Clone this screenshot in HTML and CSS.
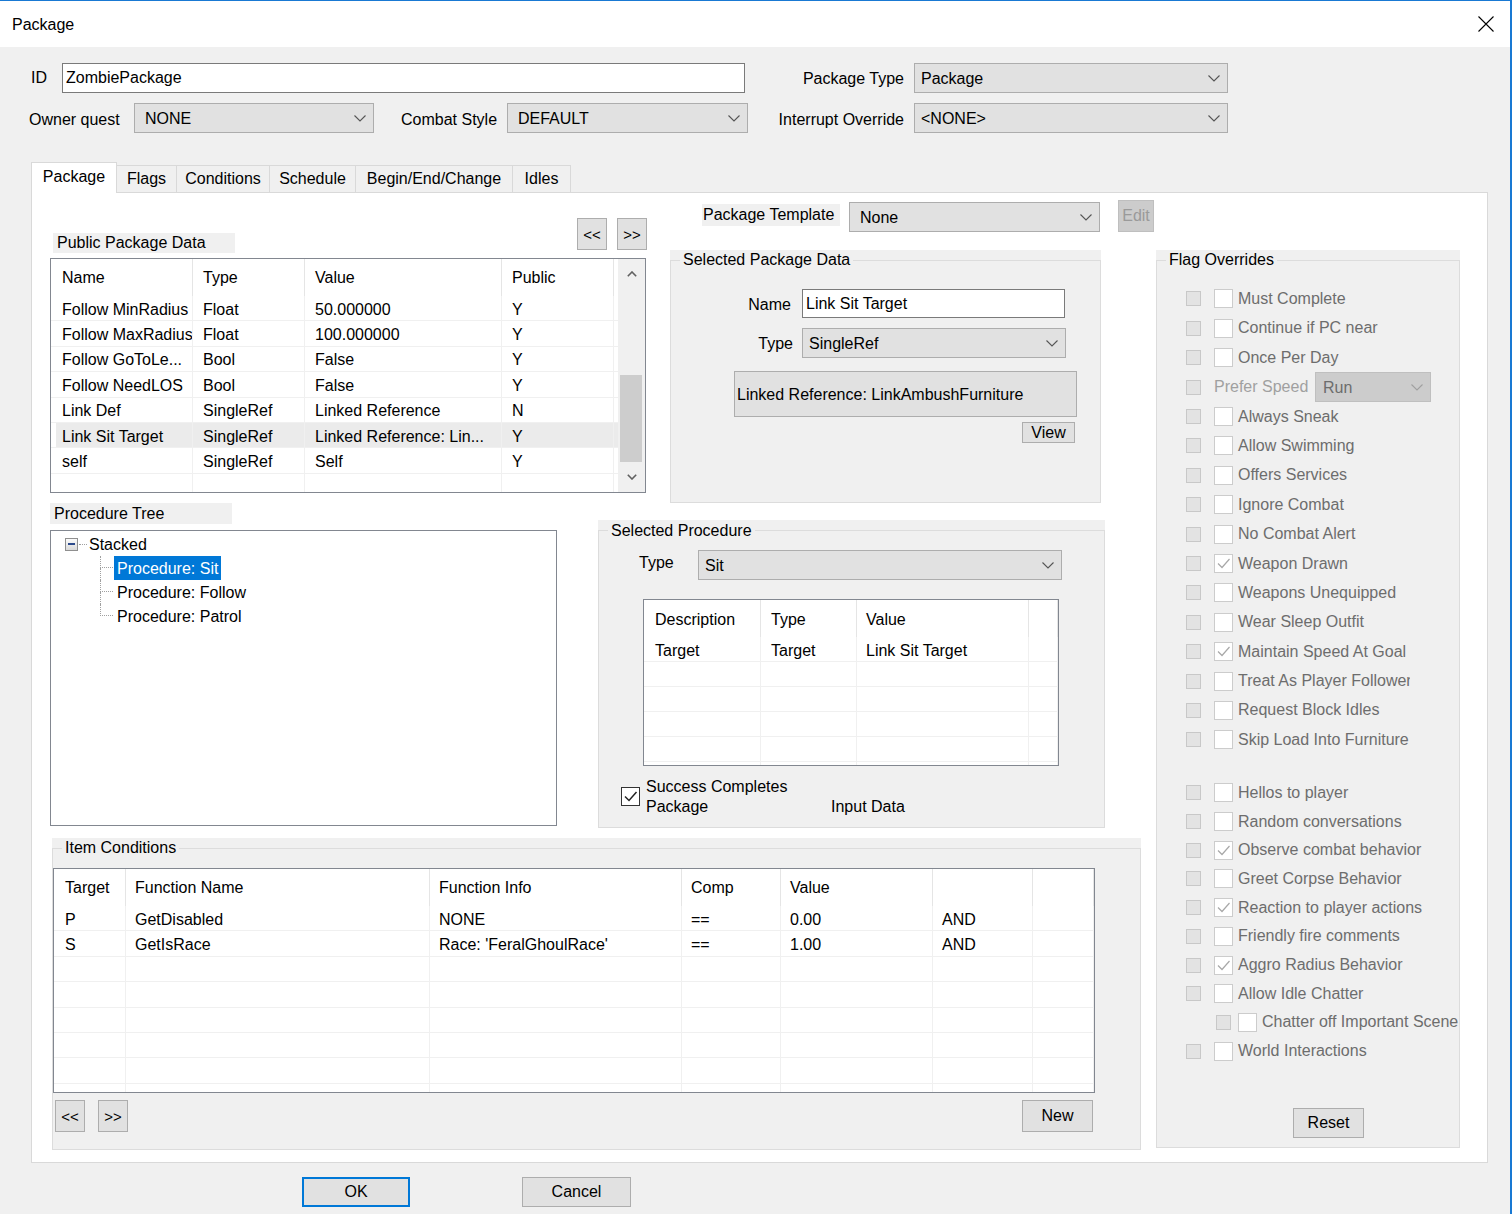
FILE: index.html
```html
<!DOCTYPE html>
<html>
<head>
<meta charset="utf-8">
<title>Package</title>
<link rel="stylesheet" href="styles.css">
</head>
<body>
<div class="window">
  <div class="titlebar">
    <span class="title">Package</span>
    <svg class="close" width="16" height="16" viewBox="0 0 16 16"><path d="M0.5 0.5 L15.5 15.5 M15.5 0.5 L0.5 15.5"/></svg>
  </div>
  <div class="client">
    <div class="frow">
      <span class="lbl l-id">ID</span>
      <div class="edit e-id">ZombiePackage</div>
      <span class="lbl lbl-r l-ptype">Package Type</span>
      <div class="combo c-ptype"><span>Package</span><svg class="chev" viewBox="0 0 12 7"><polyline points="0.5,0.5 6,6 11.5,0.5"/></svg></div>
    </div>
    <div class="frow r2">
      <span class="lbl l-owner">Owner quest</span>
      <div class="combo c-owner"><span>NONE</span><svg class="chev" viewBox="0 0 12 7"><polyline points="0.5,0.5 6,6 11.5,0.5"/></svg></div>
      <span class="lbl l-cstyle">Combat Style</span>
      <div class="combo c-cstyle"><span>DEFAULT</span><svg class="chev" viewBox="0 0 12 7"><polyline points="0.5,0.5 6,6 11.5,0.5"/></svg></div>
      <span class="lbl lbl-r l-int">Interrupt Override</span>
      <div class="combo c-int"><span>&lt;NONE&gt;</span><svg class="chev" viewBox="0 0 12 7"><polyline points="0.5,0.5 6,6 11.5,0.5"/></svg></div>
    </div>

    <div class="tabs">
      <div class="tab sel t-pkg">Package</div>
      <div class="tab t-flags">Flags</div>
      <div class="tab t-cond">Conditions</div>
      <div class="tab t-sched">Schedule</div>
      <div class="tab t-bec">Begin/End/Change</div>
      <div class="tab t-idles">Idles</div>
    </div>

    <div class="panel">
      <div class="pmain">
        <div class="rowa">
          <div class="ppd-col">
            <div class="ppd-head">
              <div class="static s-ppd">Public Package Data</div>
              <div class="navbtns"><div class="btn nb">&lt;&lt;</div><div class="btn nb">&gt;&gt;</div></div>
            </div>
            <div class="lv ppd">
              <div class="lv-main">
                <div class="lv-row lv-head"><span>Name</span><span>Type</span><span>Value</span><span>Public</span></div>
                <div class="lv-row"><span>Follow MinRadius</span><span>Float</span><span>50.000000</span><span>Y</span></div>
                <div class="lv-row"><span>Follow MaxRadius</span><span>Float</span><span>100.000000</span><span>Y</span></div>
                <div class="lv-row"><span>Follow GoToLe...</span><span>Bool</span><span>False</span><span>Y</span></div>
                <div class="lv-row"><span>Follow NeedLOS</span><span>Bool</span><span>False</span><span>Y</span></div>
                <div class="lv-row"><span>Link Def</span><span>SingleRef</span><span>Linked Reference</span><span>N</span></div>
                <div class="lv-row rsel"><span>Link Sit Target</span><span>SingleRef</span><span>Linked Reference: Lin...</span><span>Y</span></div>
                <div class="lv-row"><span>self</span><span>SingleRef</span><span>Self</span><span>Y</span></div>
                <div class="lv-row"><span></span><span></span><span></span><span></span></div>
              </div>
              <div class="vscroll">
                <div class="sarrow"><svg class="sch" viewBox="0 0 10 6"><polyline points="0.8,5.2 5,1 9.2,5.2"/></svg></div>
                <div class="strack"><div class="sthumb"></div></div>
                <div class="sarrow"><svg class="sch" viewBox="0 0 10 6"><polyline points="0.8,0.8 5,5 9.2,0.8"/></svg></div>
              </div>
            </div>
          </div>
          <div class="tpl-col">
            <div class="tpl-row">
              <div class="static s-tpl">Package Template</div>
              <div class="combo c-tpl"><span>None</span><svg class="chev" viewBox="0 0 12 7"><polyline points="0.5,0.5 6,6 11.5,0.5"/></svg></div>
              <div class="btn b-edit">Edit</div>
            </div>
            <div class="group g-spd">
              <fieldset class="gbox">
                <legend>Selected Package Data</legend>
                <div class="spd-row first"><span class="lbl spd-lbl">Name</span><div class="edit spd-name">Link Sit Target</div></div>
                <div class="spd-row"><span class="lbl spd-lbl2">Type</span><div class="combo spd-type"><span>SingleRef</span><svg class="chev" viewBox="0 0 12 7"><polyline points="0.5,0.5 6,6 11.5,0.5"/></svg></div></div>
                <div class="linked">Linked Reference: LinkAmbushFurniture</div>
                <div class="btn view">View</div>
              </fieldset>
            </div>
          </div>
        </div>

        <div class="rowb">
          <div class="tree-col">
            <div class="static s-tree">Procedure Tree</div>
            <div class="tree">
              <div class="tnode root"><span class="tminus"><i></i></span><span class="tdot"></span><span class="ttext">Stacked</span></div>
              <div class="tchildren">
                <div class="tnode"><span class="tconn"><b></b><b></b></span><span class="ttext tsel">Procedure: Sit</span></div>
                <div class="tnode"><span class="tconn"><b></b><b></b></span><span class="ttext">Procedure: Follow</span></div>
                <div class="tnode tlast"><span class="tconn"><b></b><b></b></span><span class="ttext">Procedure: Patrol</span></div>
              </div>
            </div>
          </div>
          <div class="group g-sp">
            <fieldset class="gbox">
              <legend>Selected Procedure</legend>
              <div class="sp-type"><span class="lbl">Type</span><div class="combo c-sp"><span>Sit</span><svg class="chev" viewBox="0 0 12 7"><polyline points="0.5,0.5 6,6 11.5,0.5"/></svg></div></div>
              <div class="lv sp-table">
                <div class="lv-row lv-head"><span>Description</span><span>Type</span><span>Value</span><span></span></div>
                <div class="lv-row"><span>Target</span><span>Target</span><span>Link Sit Target</span><span></span></div>
                <div class="lv-row"><span></span><span></span><span></span><span></span></div>
                <div class="lv-row"><span></span><span></span><span></span><span></span></div>
                <div class="lv-row"><span></span><span></span><span></span><span></span></div>
                <div class="lv-row"><span></span><span></span><span></span><span></span></div>
                <div class="lv-row"><span></span><span></span><span></span><span></span></div>
              </div>
              <div class="sp-check">
                <span class="cb"><svg viewBox="0 0 17 17"><polyline points="3,8.5 7,12.5 14.5,4"/></svg></span>
                <span class="sp-check-text">Success Completes<br>Package</span>
                <span class="sp-input">Input Data</span>
              </div>
            </fieldset>
          </div>
        </div>

        <div class="rowc">
          <div class="group g-ic">
            <fieldset class="gbox">
              <legend>Item Conditions</legend>
              <div class="lv ic-table">
                <div class="lv-row lv-head"><span>Target</span><span>Function Name</span><span>Function Info</span><span>Comp</span><span>Value</span><span></span><span></span></div>
                <div class="lv-row"><span>P</span><span>GetDisabled</span><span>NONE</span><span>==</span><span>0.00</span><span>AND</span><span></span></div>
                <div class="lv-row"><span>S</span><span>GetIsRace</span><span>Race: 'FeralGhoulRace'</span><span>==</span><span>1.00</span><span>AND</span><span></span></div>
                <div class="lv-row"><span></span><span></span><span></span><span></span><span></span><span></span><span></span></div>
                <div class="lv-row"><span></span><span></span><span></span><span></span><span></span><span></span><span></span></div>
                <div class="lv-row"><span></span><span></span><span></span><span></span><span></span><span></span><span></span></div>
                <div class="lv-row"><span></span><span></span><span></span><span></span><span></span><span></span><span></span></div>
                <div class="lv-row"><span></span><span></span><span></span><span></span><span></span><span></span><span></span></div>
                <div class="lv-row"><span></span><span></span><span></span><span></span><span></span><span></span><span></span></div>
              </div>
              <div class="ic-btns">
                <div class="btn nb">&lt;&lt;</div>
                <div class="btn nb">&gt;&gt;</div>
                <div class="btn b-new">New</div>
              </div>
            </fieldset>
          </div>
        </div>
      </div>

      <div class="group g-flags">
        <fieldset class="gbox">
          <legend>Flag Overrides</legend>
          <div class="fsec1">
            <div class="frw"><span class="cbs"></span><span class="cbd"></span><span class="fl">Must Complete</span></div>
            <div class="frw"><span class="cbs"></span><span class="cbd"></span><span class="fl">Continue if PC near</span></div>
            <div class="frw"><span class="cbs"></span><span class="cbd"></span><span class="fl">Once Per Day</span></div>
            <div class="frw pspeed"><span class="cbs"></span><span class="fl">Prefer Speed</span><div class="combo c-run"><span>Run</span><svg class="chev" viewBox="0 0 12 7"><polyline points="0.5,0.5 6,6 11.5,0.5"/></svg></div></div>
            <div class="frw"><span class="cbs"></span><span class="cbd"></span><span class="fl">Always Sneak</span></div>
            <div class="frw"><span class="cbs"></span><span class="cbd"></span><span class="fl">Allow Swimming</span></div>
            <div class="frw"><span class="cbs"></span><span class="cbd"></span><span class="fl">Offers Services</span></div>
            <div class="frw"><span class="cbs"></span><span class="cbd"></span><span class="fl">Ignore Combat</span></div>
            <div class="frw"><span class="cbs"></span><span class="cbd"></span><span class="fl">No Combat Alert</span></div>
            <div class="frw"><span class="cbs"></span><span class="cbd"><svg viewBox="0 0 17 17"><polyline points="3,8.5 7,12.5 14.5,4"/></svg></span><span class="fl">Weapon Drawn</span></div>
            <div class="frw"><span class="cbs"></span><span class="cbd"></span><span class="fl">Weapons Unequipped</span></div>
            <div class="frw"><span class="cbs"></span><span class="cbd"></span><span class="fl">Wear Sleep Outfit</span></div>
            <div class="frw"><span class="cbs"></span><span class="cbd"><svg viewBox="0 0 17 17"><polyline points="3,8.5 7,12.5 14.5,4"/></svg></span><span class="fl">Maintain Speed At Goal</span></div>
            <div class="frw"><span class="cbs"></span><span class="cbd"></span><span class="fl clip">Treat As Player Follower</span></div>
            <div class="frw"><span class="cbs"></span><span class="cbd"></span><span class="fl">Request Block Idles</span></div>
            <div class="frw"><span class="cbs"></span><span class="cbd"></span><span class="fl">Skip Load Into Furniture</span></div>
          </div>
          <div class="fsec2">
            <div class="frw"><span class="cbs"></span><span class="cbd"></span><span class="fl">Hellos to player</span></div>
            <div class="frw"><span class="cbs"></span><span class="cbd"></span><span class="fl">Random conversations</span></div>
            <div class="frw"><span class="cbs"></span><span class="cbd"><svg viewBox="0 0 17 17"><polyline points="3,8.5 7,12.5 14.5,4"/></svg></span><span class="fl">Observe combat behavior</span></div>
            <div class="frw"><span class="cbs"></span><span class="cbd"></span><span class="fl">Greet Corpse Behavior</span></div>
            <div class="frw"><span class="cbs"></span><span class="cbd"><svg viewBox="0 0 17 17"><polyline points="3,8.5 7,12.5 14.5,4"/></svg></span><span class="fl">Reaction to player actions</span></div>
            <div class="frw"><span class="cbs"></span><span class="cbd"></span><span class="fl">Friendly fire comments</span></div>
            <div class="frw"><span class="cbs"></span><span class="cbd"><svg viewBox="0 0 17 17"><polyline points="3,8.5 7,12.5 14.5,4"/></svg></span><span class="fl">Aggro Radius Behavior</span></div>
            <div class="frw"><span class="cbs"></span><span class="cbd"></span><span class="fl">Allow Idle Chatter</span></div>
            <div class="frw indent"><span class="cbs"></span><span class="cbd"></span><span class="fl">Chatter off Important Scene</span></div>
            <div class="frw"><span class="cbs"></span><span class="cbd"></span><span class="fl">World Interactions</span></div>
          </div>
          <div class="btn b-reset">Reset</div>
        </fieldset>
      </div>
    </div>

    <div class="dlg-btns">
      <div class="btn b-ok">OK</div>
      <div class="btn b-cancel">Cancel</div>
    </div>
  </div>
</div>
</body>
</html>
```

FILE: styles.css
```css
* { box-sizing: border-box; }
html, body { margin: 0; padding: 0; }
body {
  font-family: "Liberation Sans", Arial, sans-serif;
  font-size: 16px;
  color: #000;
  background: #f0f0f0;
}
.window {
  width: 1512px;
  height: 1214px;
  border-top: 1px solid #1979d3;
  border-right: 2px solid #1979d3;
  background: #f0f0f0;
  overflow: hidden;
}
.titlebar {
  height: 46px;
  background: #fff;
  display: flex;
  align-items: center;
  padding-left: 12px;
}
.title { padding-top: 2px; }
.close { margin-left: auto; margin-right: 16px; }
.close path { stroke: #000; stroke-width: 1.1; fill: none; }

.client { padding-top: 16px; }
.frow { display: flex; align-items: center; height: 30px; }
.r2 { margin-top: 10px; }
.r2 > .lbl { padding-top: 3px; }
.lbl { white-space: nowrap; flex: none; }
.lbl-r { text-align: right; padding-right: 10px; }
.l-id { margin-left: 31px; width: 31px; }
.edit {
  height: 30px;
  background: #fff;
  border: 1px solid #7a7a7a;
  display: flex;
  align-items: center;
  padding-left: 3px;
  white-space: nowrap;
  flex: none;
}
.e-id { width: 683px; }
.l-ptype { width: 169px; padding-top: 1px; }
.combo {
  height: 30px;
  background: #e1e1e1;
  border: 1px solid #adadad;
  display: flex;
  align-items: center;
  padding-left: 8px;
  white-space: nowrap;
  flex: none;
}
.combo > span { padding-top: 1px; }
.combo .chev { margin-left: auto; margin-right: 7px; width: 12px; height: 7px; flex: none; }
.chev polyline { fill: none; stroke: #555; stroke-width: 1.1; }
.c-ptype { width: 314px; padding-left: 6px; }
.l-owner { margin-left: 29px; width: 105px; }
.c-owner { width: 240px; padding-left: 10px; }
.l-cstyle { width: 133px; padding-left: 27px; }
.c-cstyle { width: 241px; padding-left: 10px; }
.l-int { width: 166px; }
.c-int { width: 314px; padding-left: 6px; }

/* tabs */
.tabs { display: flex; align-items: flex-end; height: 30px; margin-top: 29px; margin-left: 31px; }
.tab {
  height: 27px;
  background: #f0f0f0;
  border: 1px solid #d9d9d9;
  border-bottom: none;
  border-left: none;
  display: flex;
  align-items: center;
  justify-content: center;
  padding-bottom: 1px;
  white-space: nowrap;
}
.tab.sel {
  height: 31px;
  background: #fff;
  border-left: 1px solid #d9d9d9;
  margin-bottom: -1px;
  position: relative;
  z-index: 1;
  padding-bottom: 3px;
}
.t-pkg { width: 86px; }
.t-flags { width: 60px; }
.t-cond { width: 93px; }
.t-sched { width: 86px; }
.t-bec { width: 157px; }
.t-idles { width: 58px; }

/* panel */
.panel {
  margin-left: 31px;
  width: 1457px;
  height: 971px;
  border: 1px solid #d9d9d9;
  background: #fff;
  display: flex;
}
.pmain { width: 1124px; flex: none; display: flex; flex-direction: column; }
.rowa { height: 310px; display: flex; flex: none; }
.rowb { height: 335px; display: flex; flex: none; }
.rowc { height: 312px; display: flex; flex: none; }

.static { background: #f0f0f0; padding-left: 4px; line-height: 20px; white-space: nowrap; }
.btn {
  background: #e1e1e1;
  border: 1px solid #adadad;
  display: flex;
  align-items: center;
  justify-content: center;
  white-space: nowrap;
  flex: none;
}
.nb { width: 30px; height: 32px; font-size: 15px; }

/* public package data */
.ppd-col { margin-left: 18px; width: 610px; flex: none; }
.ppd-head { height: 65px; display: flex; align-items: flex-start; }
.s-ppd { margin-left: 3px; margin-top: 40px; width: 182px; height: 20px; flex: none; }
.navbtns { display: flex; gap: 10px; margin-left: 342px; margin-top: 25px; }

.lv { background: #fff; border: 1px solid #828790; overflow: hidden; flex: none; }
.lv-row { display: grid; height: 25.4px; border-bottom: 1px solid #f0f0f0; }
.lv-row > span {
  display: flex;
  align-items: center;
  padding-left: 10px;
  padding-top: 3px;
  border-right: 1px solid #f0f0f0;
  white-space: nowrap;
  overflow: hidden;
}
.lv-row > span:first-child { padding-left: 11px; }
.lv-head { height: 37px; border-bottom: none; }
.lv-head > span { border-right-color: #e5e5e5; padding-top: 0; }

.ppd { width: 596px; height: 235px; display: flex; }
.lv-main { flex: 1; min-width: 0; }
.ppd .lv-row { grid-template-columns: 142px 112px 197px 112px; }
.ppd .rsel { background: linear-gradient(to right, #fff 5px, #ebebeb 5px); }
.vscroll { width: 27px; flex: none; display: flex; flex-direction: column; background: #f0f0f0; }
.sarrow { height: 30px; display: flex; align-items: center; justify-content: center; flex: none; }
.sch { width: 10px; height: 6px; }
.sch polyline { fill: none; stroke: #606060; stroke-width: 1.6; }
.strack { flex: 1; display: flex; flex-direction: column; }
.sthumb { margin: 86px 3px 0 2px; flex: 1; background: #cdcdcd; }

/* template row */
.tpl-col { margin-left: 10px; width: 484px; flex: none; }
.tpl-row { display: flex; align-items: flex-start; margin-top: 7px; height: 32px; }
.s-tpl { margin-left: 32px; margin-top: 4px; width: 138px; height: 22px; line-height: 22px; padding-left: 1px; flex: none; }
.c-tpl { margin-left: 9px; margin-top: 2px; width: 251px; padding-left: 10px; }
.b-edit { margin-left: 18px; width: 36px; height: 32px; background: #cccccc; border-color: #bfbfbf; color: #9a9a9a; }

/* group boxes */
.group { background: #f0f0f0; flex: none; }
.gbox {
  margin: 0;
  padding: 0;
  border: 1px solid #dcdcdc;
  height: 100%;
  min-width: 0;
}
.gbox > legend {
  margin-left: 9px;
  padding: 0 3px;
  height: 20px;
  line-height: 20px;
  white-space: nowrap;
}

.g-spd { margin-top: 18px; width: 431px; height: 253px; }
.spd-row { display: flex; align-items: center; margin-top: 10px; }
.spd-row.first { margin-top: 19px; }
.spd-lbl { width: 120px; text-align: right; margin-right: 11px; padding-top: 2px; }
.spd-lbl2 { width: 122px; text-align: right; margin-right: 9px; padding-top: 2px; }
.spd-name { width: 263px; height: 29px; }
.spd-type { width: 264px; padding-left: 6px; }
.linked {
  margin-top: 13px;
  margin-left: 63px;
  width: 343px;
  height: 46px;
  background: #e1e1e1;
  border: 1px solid #adadad;
  display: flex;
  align-items: center;
  padding-left: 2px;
  padding-top: 1px;
  white-space: nowrap;
}
.view { margin-top: 5px; margin-left: 351px; width: 53px; height: 21px; }

/* procedure tree */
.tree-col { margin-left: 18px; width: 507px; flex: none; }
.s-tree { width: 182px; height: 21px; line-height: 21px; }
.tree {
  width: 507px;
  height: 296px;
  margin-top: 6px;
  border: 1px solid #828790;
  background: #fff;
  padding-top: 1px;
}
.tnode { height: 24px; display: flex; align-items: center; white-space: nowrap; }
.root { padding-left: 14px; }
.tminus {
  width: 13px;
  height: 13px;
  border: 1px solid #8f8f8f;
  background: linear-gradient(#fbfbfb, #d9d9d9);
  display: flex;
  align-items: center;
  justify-content: center;
  flex: none;
}
.tminus i { display: block; width: 7px; height: 2px; background: #2c4a8c; }
.tdot { width: 8px; height: 0; border-top: 1px dotted #a0a0a0; margin-left: 1px; flex: none; }
.root .ttext { margin-left: 0; padding-left: 2px; }
.tchildren { padding-left: 49px; }
.tconn { width: 13px; height: 24px; display: flex; flex-direction: column; flex: none; }
.tconn b { display: block; height: 12px; border-left: 1px dotted #a0a0a0; }
.tconn b:first-child { border-bottom: 1px dotted #a0a0a0; }
.tlast .tconn b:last-child { border-left: none; }
.ttext { padding: 1px 3px 0 3px; height: 24px; line-height: 24px; margin-left: 1px; }
.tsel { background: #0078d7; color: #fff; }

/* selected procedure */
.g-sp { margin-left: 41px; margin-top: 17px; width: 507px; height: 308px; }
.g-sp .gbox > legend { padding-top: 1px; }
.sp-type { display: flex; align-items: flex-start; margin-top: 10px; }
.sp-type .lbl { margin-left: 40px; width: 59px; line-height: 26px; }
.c-sp { width: 364px; padding-left: 6px; }
.sp-table { margin-top: 19px; margin-left: 44px; width: 416px; height: 167px; }
.sp-table .lv-row { grid-template-columns: 117px 96px 172px 29px; height: 25px; }
.sp-table .lv-head { height: 37px; }
.sp-table .lv-head > span { padding-top: 3px; }
.sp-table .lv-row > span { padding-left: 10px; }
.sp-table .lv-row > span:first-child { padding-left: 11px; }
.sp-table .lv-row > span:nth-child(3) { padding-left: 9px; }
.sp-check { display: flex; align-items: center; margin-top: 10px; }
.cb {
  width: 19px;
  height: 19px;
  border: 1px solid #333;
  background: #fff;
  margin-left: 22px;
  flex: none;
  display: flex;
}
.cb svg { width: 17px; height: 17px; }
.cb polyline { fill: none; stroke: #222; stroke-width: 1.5; }
.sp-check-text { margin-left: 6px; width: 185px; line-height: 20px; flex: none; padding-top: 1px; }
.sp-input { align-self: flex-end; line-height: 20px; }

/* item conditions */
.g-ic { margin-left: 20px; width: 1089px; height: 312px; }
.ic-table { margin-top: 10px; width: 1042px; height: 225px; }
.ic-table .lv-row { grid-template-columns: 72px 304px 252px 99px 152px 100px 61px; }
.ic-table .lv-head > span { padding-top: 1px; }
.ic-table .lv-row > span { padding-left: 9px; }
.ic-table .lv-row > span:first-child { padding-left: 11px; }
.ic-btns { display: flex; margin-top: 7px; }
.ic-btns .nb:first-child { margin-left: 2px; }
.ic-btns .nb:nth-child(2) { margin-left: 13px; }
.b-new { margin-left: 894px; width: 71px; height: 32px; }

/* flag overrides */
.g-flags { margin-top: 57px; width: 304px; height: 898px; }
.fsec1 { margin-top: 14.3px; }
.fsec1 .frw { height: 29.4px; }
.fsec2 { margin-top: 24px; }
.fsec2 .frw { height: 28.7px; }
.frw { display: flex; align-items: center; color: #6d6d6d; white-space: nowrap; }
.cbs {
  width: 15px;
  height: 15px;
  background: #e3e3e3;
  border: 1px solid #c8c8c8;
  margin-left: 29px;
  flex: none;
}
.cbd {
  width: 19px;
  height: 19px;
  background: #fff;
  border: 1px solid #cccccc;
  margin-left: 13px;
  flex: none;
  display: flex;
}
.cbd svg { width: 17px; height: 17px; }
.cbd polyline { fill: none; stroke: #a8a8a8; stroke-width: 1.2; }
.fl { margin-left: 5px; }
.indent .cbs { margin-left: 59px; }
.indent .cbd { margin-left: 7px; }
.pspeed .fl { margin-left: 13px; width: 101px; color: #a0a0a0; flex: none; }
.c-run { width: 116px; height: 30px; background: #cccccc; border-color: #bfbfbf; color: #6d6d6d; padding-left: 7px; }
.c-run .chev polyline { stroke: #a0a0a0; }
.clip { width: 172px; overflow: hidden; flex: none; }
.b-reset { margin-top: 42.3px; margin-left: 136px; width: 71px; height: 30px; }

/* dialog buttons */
.dlg-btns { display: flex; margin-top: 14px; padding-left: 302px; }
.b-ok { width: 108px; height: 30px; border: 2px solid #0078d7; }
.b-cancel { width: 109px; height: 30px; margin-left: 112px; }
```
